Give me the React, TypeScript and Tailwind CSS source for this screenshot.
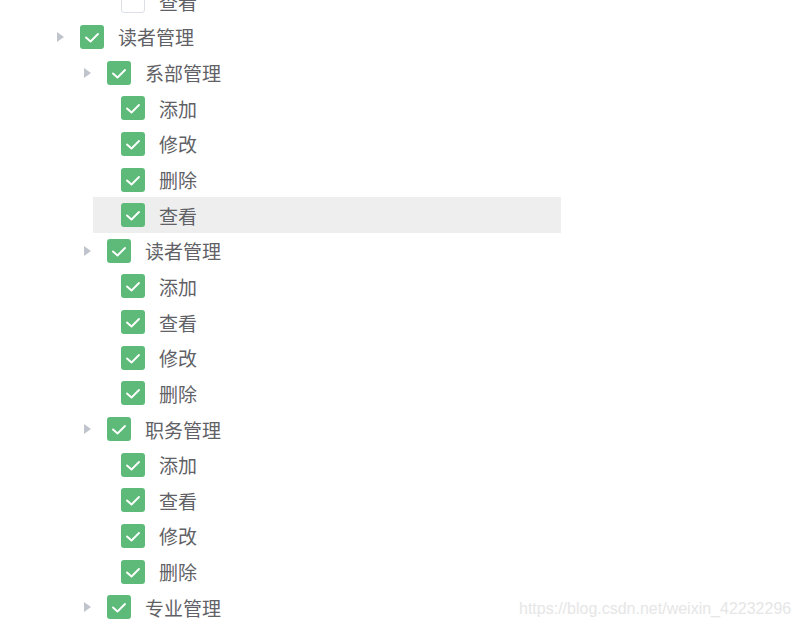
const ROWS: { label: string; kind: "root" | "group" | "leaf"; checked: boolean; active?: boolean }[] = [
  { label: "查看", kind: "leaf", checked: false },
  { label: "读者管理", kind: "root", checked: true },
  { label: "系部管理", kind: "group", checked: true },
  { label: "添加", kind: "leaf", checked: true },
  { label: "修改", kind: "leaf", checked: true },
  { label: "删除", kind: "leaf", checked: true },
  { label: "查看", kind: "leaf", checked: true, active: true },
  { label: "读者管理", kind: "group", checked: true },
  { label: "添加", kind: "leaf", checked: true },
  { label: "查看", kind: "leaf", checked: true },
  { label: "修改", kind: "leaf", checked: true },
  { label: "删除", kind: "leaf", checked: true },
  { label: "职务管理", kind: "group", checked: true },
  { label: "添加", kind: "leaf", checked: true },
  { label: "查看", kind: "leaf", checked: true },
  { label: "修改", kind: "leaf", checked: true },
  { label: "删除", kind: "leaf", checked: true },
  { label: "专业管理", kind: "group", checked: true },
];

function Box({ checked }: { checked: boolean }) {
  if (!checked) {
    return <span className="w-6 h-6 shrink-0 rounded-[3px] border border-[#dcdfe6] bg-white" />;
  }
  return (
    <span className="w-6 h-6 shrink-0 rounded-[3px] bg-[#5dba78] flex items-center justify-center">
      <svg width="24" height="24" viewBox="0 0 24 24" fill="none">
        <polyline points="6,12.5 10.5,16.5 18,9" stroke="#fff" strokeWidth="1.9" strokeLinecap="round" strokeLinejoin="round" />
      </svg>
    </span>
  );
}

function Arrow() {
  return (
    <svg width="7" height="10" viewBox="0 0 7 10" className="shrink-0">
      <polygon points="0,0 7,5 0,10" fill="#c0c4cc" />
    </svg>
  );
}

export default function App() {
  return (
    <div className="relative w-[799px] h-[625px] overflow-hidden bg-white" style={{ fontFamily: '"Noto Sans CJK SC", "Noto Sans", sans-serif' }}>
      <div className="-mt-[16.5px] flex flex-col">
        {ROWS.map((r, i) => {
          const row =
            r.kind === "root"
              ? "ml-[57px] w-[504px]"
              : r.kind === "group"
              ? "ml-[84px] w-[477px]"
              : "ml-[93px] w-[468px] pl-[28px]";
          return (
            <div
              key={i}
              className={`h-[35.65px] flex items-center ${row} ${r.active ? "bg-[#eeeeee]" : ""}`}
            >
              {r.kind !== "leaf" && (
                <span className="w-[23px] shrink-0 flex">
                  <Arrow />
                </span>
              )}
              <Box checked={r.checked} />
              <span className="ml-[14px] text-[19px] leading-none text-[#5f6166]">{r.label}</span>
            </div>
          );
        })}
      </div>
      <div
        className="absolute left-[519px] top-[597px] text-[16px] text-[#e6e6e6]"
        style={{ fontFamily: '"Liberation Sans", Arial, sans-serif' }}
      >
        https://blog.csdn.net/weixin_42232296
      </div>
    </div>
  );
}
